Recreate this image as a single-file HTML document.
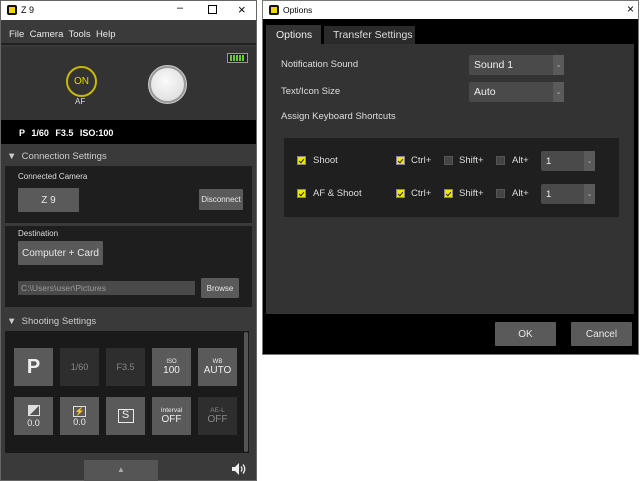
<!DOCTYPE html>
<html><head><meta charset="utf-8"><style>
*{box-sizing:border-box;margin:0;padding:0}
body{width:640px;height:481px;background:#fff;position:relative;overflow:hidden;font-family:"Liberation Sans",sans-serif;font-size:9px;color:#ddd}
.a{position:absolute}
.btn{position:absolute;background:#5a5a5a;color:#e8e8e8;display:flex;align-items:center;justify-content:center;border-radius:1px}
.tile{position:absolute;width:39px;height:38px;background:#5a5a5a;color:#eee;display:flex;flex-direction:column;align-items:center;justify-content:center;text-align:center}
.tile.d{background:#2e2e2e;color:#888}
.cb{position:absolute;width:9px;height:9px;background:#f2e600;border:1px solid #888}
.cb::after{content:"";position:absolute;left:2px;top:1px;width:2px;height:4px;border:solid #222;border-width:0 1px 1px 0;transform:rotate(40deg)}
.cb.off{background:#444;border-color:#555}
.cb.off::after{display:none}
.sel{position:absolute;background:#4a4a4a;color:#eee;display:flex;align-items:center;padding-left:5px;border-radius:2px}
.sel::after{content:"⌄";position:absolute;right:0;top:0;bottom:0;width:11px;background:#5a5a5a;font-size:7px;color:#bbb;display:flex;justify-content:center;align-items:center}
.lb{position:absolute;font-size:9.5px}
</style></head><body>
<!-- LEFT WINDOW -->
<div class="a" style="left:0;top:0;width:257px;height:481px;background:#3a3a3a;border:1px solid #666"></div>
<div class="a" style="left:1px;top:1px;width:255px;height:19px;background:#fff;color:#000;font-size:9px">
 <div class="a" style="left:6px;top:4px;width:10px;height:10px;background:#111;border-radius:2px"><div class="a" style="left:2px;top:2px;width:6px;height:6px;background:#f0d800"></div></div>
 <div class="a" style="left:20px;top:4px">Z 9</div>
 <div class="a" style="left:176px;top:1px;font-size:11px">–</div>
 <div class="a" style="left:207px;top:4px;width:9px;height:9px;border:1px solid #000"></div>
 <div class="a" style="left:237px;top:1px;font-size:13px">×</div>
</div>
<div class="a" style="left:1px;top:20px;width:255px;height:25px;background:#3a3a3a;color:#e8e8e8;font-size:9.5px;padding:9px 0 0 8px;border-bottom:2px solid #222">File&nbsp; Camera&nbsp; Tools&nbsp; Help</div>
<div class="a" style="left:1px;top:47px;width:255px;height:73px;background:#333"></div>
<div class="a" style="left:66px;top:66px;width:31px;height:31px;border-radius:50%;border:2px solid #c8b800;color:#e6d600;font-size:10px;display:flex;align-items:center;justify-content:center">ON</div>
<div class="a" style="left:75px;top:97px;color:#ddd;font-size:8px">AF</div>
<div class="a" style="left:148px;top:65px;width:39px;height:39px;border-radius:50%;background:#999;border:1px solid #ccc"></div>
<div class="a" style="left:151px;top:68px;width:33px;height:33px;border-radius:50%;background:radial-gradient(circle at 45% 40%,#fafafa,#d8d8d8)"></div>
<div class="a" style="left:227px;top:53px;width:21px;height:10px;border:1px solid #999;background:#222"><div class="a" style="left:2px;top:1px;width:15px;height:6px;background:repeating-linear-gradient(90deg,#6c3 0 2px,#222 2px 3px)"></div></div>
<div class="a" style="left:1px;top:120px;width:255px;height:24px;background:#000;color:#fff;font-weight:bold;font-size:9px;padding:8px 0 0 18px;word-spacing:4px">P 1/60 F3.5 ISO:100</div>
<div class="a" style="left:7px;top:151px;font-size:9.5px;color:#ccc">▼&nbsp; Connection Settings</div>
<div class="a" style="left:5px;top:166px;width:247px;height:57px;background:#1e1e1e"></div>
<div class="a" style="left:18px;top:172px;font-size:8px">Connected Camera</div>
<div class="btn" style="left:18px;top:188px;width:61px;height:24px;font-size:10px">Z 9</div>
<div class="btn" style="left:199px;top:189px;width:44px;height:21px;font-size:8px">Disconnect</div>
<div class="a" style="left:5px;top:226px;width:247px;height:81px;background:#1e1e1e"></div>
<div class="a" style="left:18px;top:229px;font-size:8px">Destination</div>
<div class="btn" style="left:18px;top:241px;width:85px;height:24px;font-size:10px">Computer + Card</div>
<div class="a" style="left:18px;top:281px;width:177px;height:14px;background:#4a4a4a;color:#999;font-size:8.5px;padding:2px 0 0 3px">C:\Users\user\Pictures</div>
<div class="btn" style="left:201px;top:278px;width:38px;height:20px;font-size:8px">Browse</div>
<div class="a" style="left:7px;top:316px;font-size:9.5px;color:#ccc">▼&nbsp; Shooting Settings</div>
<div class="a" style="left:5px;top:331px;width:244px;height:122px;background:#1a1a1a"></div>
<div class="a" style="left:244px;top:332px;width:4px;height:120px;background:#555;border-radius:2px"></div>
<div class="tile" style="left:14px;top:348px;font-size:20px;font-weight:bold">P</div>
<div class="tile d" style="left:60px;top:348px;font-size:9px">1/60</div>
<div class="tile d" style="left:106px;top:348px;font-size:9px">F3.5</div>
<div class="tile" style="left:152px;top:348px;font-size:10px"><span style="font-size:6px">ISO</span>100</div>
<div class="tile" style="left:198px;top:348px;font-size:10px"><span style="font-size:6px">WB</span>AUTO</div>
<div class="tile" style="left:14px;top:397px;font-size:9px"><span style="display:inline-block;width:12px;height:11px;border:1px solid #ddd;background:linear-gradient(135deg,#ddd 50%,#555 50%);margin-bottom:2px"></span>0.0</div>
<div class="tile" style="left:60px;top:397px;font-size:9px"><span style="display:inline-block;width:13px;height:11px;border:1px solid #ddd;font-size:8px;line-height:9px;font-weight:bold">⚡</span>0.0</div>
<div class="tile" style="left:106px;top:397px"><span style="display:inline-block;width:16px;height:14px;border:1.5px solid #eee;font-size:11px;line-height:11px">S</span></div>
<div class="tile" style="left:152px;top:397px;font-size:10px"><span style="font-size:6.5px">Interval</span>OFF</div>
<div class="tile d" style="left:198px;top:397px;font-size:10px"><span style="font-size:6.5px">AE-L</span>OFF</div>
<div class="a" style="left:1px;top:458px;width:255px;height:22px;background:#3a3a3a"></div>
<div class="a" style="left:84px;top:460px;width:74px;height:21px;background:#555;color:#aaa;font-size:8px;text-align:center;padding-top:5px">▲</div>
<svg class="a" style="left:231px;top:462px" width="16" height="14" viewBox="0 0 16 14"><path d="M1 5h3l4-4v12l-4-4H1z" fill="#eee"/><path d="M10 4.5q2 2.5 0 5M12 2.5q3.5 4.5 0 9" stroke="#eee" stroke-width="1.3" fill="none"/></svg>
<!-- RIGHT WINDOW -->
<div class="a" style="left:262px;top:0;width:377px;height:355px;background:#000;border:1px solid #777"></div>
<div class="a" style="left:263px;top:1px;width:375px;height:18px;background:#fff;color:#000;font-size:8.5px">
 <div class="a" style="left:6px;top:4px;width:10px;height:10px;background:#111;border-radius:2px"><div class="a" style="left:2px;top:2px;width:6px;height:6px;background:#f0d800"></div></div>
 <div class="a" style="left:20px;top:4px">Options</div>
 <div class="a" style="left:364px;top:1px;font-size:12px">×</div>
</div>
<div class="a" style="left:266px;top:25px;width:55px;height:20px;background:#333;color:#eee;font-size:10.5px;padding:4px 0 0 10px">Options</div>
<div class="a" style="left:324px;top:26px;width:91px;height:18px;background:#2a2a2a;color:#ddd;font-size:10.5px;padding:3px 0 0 9px">Transfer Settings</div>
<div class="a" style="left:266px;top:44px;width:368px;height:270px;background:#333"></div>
<div class="lb" style="left:281px;top:59px">Notification Sound</div>
<div class="sel" style="left:469px;top:55px;width:95px;height:20px;font-size:10.5px">Sound 1</div>
<div class="lb" style="left:281px;top:86px">Text/Icon Size</div>
<div class="sel" style="left:469px;top:82px;width:95px;height:20px;font-size:10.5px">Auto</div>
<div class="lb" style="left:281px;top:111px">Assign Keyboard Shortcuts</div>
<div class="a" style="left:284px;top:138px;width:335px;height:79px;background:#1f1f1f"></div>
<div class="cb" style="left:297px;top:156px"></div><div class="lb" style="left:313px;top:155px">Shoot</div>
<div class="cb" style="left:396px;top:156px"></div><div class="lb" style="left:411px;top:155px">Ctrl+</div>
<div class="cb off" style="left:444px;top:156px"></div><div class="lb" style="left:459px;top:155px">Shift+</div>
<div class="cb off" style="left:496px;top:156px"></div><div class="lb" style="left:512px;top:155px">Alt+</div>
<div class="sel" style="left:541px;top:151px;width:54px;height:20px;font-size:9.5px">1</div>
<div class="cb" style="left:297px;top:189px"></div><div class="lb" style="left:313px;top:188px">AF &amp; Shoot</div>
<div class="cb" style="left:396px;top:189px"></div><div class="lb" style="left:411px;top:188px">Ctrl+</div>
<div class="cb" style="left:444px;top:189px"></div><div class="lb" style="left:459px;top:188px">Shift+</div>
<div class="cb off" style="left:496px;top:189px"></div><div class="lb" style="left:512px;top:188px">Alt+</div>
<div class="sel" style="left:541px;top:184px;width:54px;height:20px;font-size:9.5px">1</div>
<div class="btn" style="left:495px;top:322px;width:61px;height:24px;font-size:10px">OK</div>
<div class="btn" style="left:571px;top:322px;width:61px;height:24px;font-size:10px">Cancel</div>
</body></html>
